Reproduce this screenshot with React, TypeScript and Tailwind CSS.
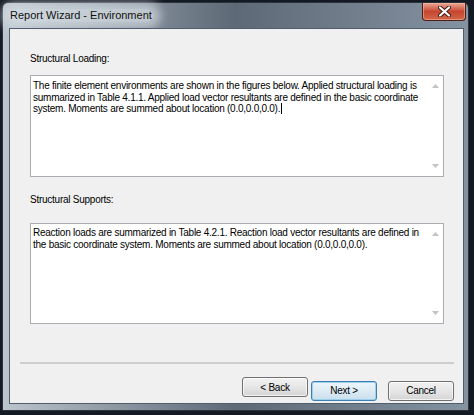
import React from "react"

const font = { fontFamily: '"Liberation Sans", Arial, sans-serif' }

function ScrollColumn() {
  return (
    <div className="w-[16px] flex flex-col items-center justify-between py-[8px]">
      <svg width="7" height="4" viewBox="0 0 7 4">
        <path d="M0 4 L3.5 0 L7 4 Z" fill="#c2c2c2" />
      </svg>
      <svg width="7" height="4" viewBox="0 0 7 4">
        <path d="M0 0 L3.5 4 L7 0 Z" fill="#c2c2c2" />
      </svg>
    </div>
  )
}

function TextBox({ lines, height, caret, padTop }: { lines: string[]; height: string; caret?: boolean; padTop: string }) {
  return (
    <div className={`flex bg-white border border-[#abadb3] ${height}`}>
      <div className={`flex-1 pl-[2px] ${padTop} text-[10px] tracking-[-0.25px] leading-[11.5px] text-black whitespace-nowrap`}>
        {lines.map((l, i) => (
          <div key={i}>
            {l}
            {caret && i === lines.length - 1 && (
              <span className="inline-block w-px h-[11px] bg-black align-[-2px] ml-[1px]" />
            )}
          </div>
        ))}
      </div>
      <ScrollColumn />
    </div>
  )
}

function Btn({ label, def }: { label: string; def?: boolean }) {
  return (
    <button
      className={
        def
          ? "w-[66px] h-[20px] rounded-[3px] border border-[#3c7fb1] bg-gradient-to-b from-[#eef6fb] via-[#dcebf4] to-[#c9dfec] shadow-[inset_0_0_0_1px_rgba(150,205,235,0.9)] text-[10px] tracking-[-0.25px] text-black"
          : "w-[66px] h-[20px] rounded-[3px] border border-[#707070] bg-gradient-to-b from-[#f2f2f2] via-[#e6e6e6] to-[#d4d4d4] shadow-[inset_0_0_0_1px_rgba(255,255,255,0.7)] text-[10px] tracking-[-0.25px] text-black"
      }
    >
      {label}
    </button>
  )
}

export default function App() {
  return (
    <div className="w-[474px] h-[415px] bg-[#141a24] pt-[2px] pl-[2px] overflow-hidden" style={font}>
      <div className="w-[467px] h-[409px] border border-[#2b323b] rounded-t-[6px] flex flex-col bg-gradient-to-r from-[#bcc5ce] via-[#5d6976] to-[#8592a1]">
        {/* title bar */}
        <div className="h-[25px] flex justify-between">
          <div className="self-center ml-[5px] px-[2px] text-[11px] leading-[13px] text-[#111] bg-[#d9dfe5]/70 rounded-full shadow-[0_0_10px_7px_rgba(217,223,229,0.65)]">
            Report Wizard - Environment
          </div>
          <div className="mr-[2px] w-[44px] h-[18px] rounded-b-[4px] border border-t-0 border-[#4a2018] bg-gradient-to-b from-[#e9a896] via-[#c7452f] to-[#d2674a] flex items-center justify-center shadow-[inset_0_0_0_1px_rgba(255,190,170,0.5)]">
            <svg width="13" height="11" viewBox="0 0 13 11">
              <path d="M2 1.5 L11 9.5 M11 1.5 L2 9.5" stroke="#3a1a14" strokeWidth="4" strokeLinecap="round" />
              <path d="M2 1.5 L11 9.5 M11 1.5 L2 9.5" stroke="#ffffff" strokeWidth="2.2" strokeLinecap="round" />
            </svg>
          </div>
        </div>
        {/* frame + client */}
        <div className="flex-1 flex pl-[6px] pr-[4px] pb-[6px]">
          <div className="flex-1 border border-[#4f5d6c] bg-[#f0f0f0] flex flex-col">
            <div className="px-[20px] pr-[19px] pt-[24px] flex flex-col">
              <div className="text-[10px] tracking-[-0.25px] leading-[12px] text-black">Structural Loading:</div>
              <div className="mt-[10px]">
                <TextBox
                  height="h-[102px]"
                  padTop="pt-[4px]"
                  caret
                  lines={[
                    "The finite element environments are shown in the figures below. Applied structural loading is",
                    "summarized in Table 4.1.1. Applied load vector resultants are defined in the basic coordinate",
                    "system. Moments are summed about location (0.0,0.0,0.0).",
                  ]}
                />
              </div>
              <div className="mt-[17px] text-[10px] tracking-[-0.25px] leading-[12px] text-black">Structural Supports:</div>
              <div className="mt-[17px]">
                <TextBox
                  height="h-[101px]"
                  padTop="pt-[3px]"
                  lines={[
                    "Reaction loads are summarized in Table 4.2.1. Reaction load vector resultants are defined in",
                    "the basic coordinate system. Moments are summed about location (0.0,0.0,0.0).",
                  ]}
                />
              </div>
            </div>
            <div className="mt-[38px] ml-[10px] mr-[9px] h-[2px] bg-[#cdcdcd]" />
            <div className="mt-[13px] mr-[9px] flex justify-end">
              <Btn label="< Back" />
              <div className="ml-[3px]">
                <Btn label="Next >" def />
              </div>
              <div className="ml-[11px]">
                <Btn label="Cancel" />
              </div>
            </div>
          </div>
        </div>
      </div>
    </div>
  )
}
